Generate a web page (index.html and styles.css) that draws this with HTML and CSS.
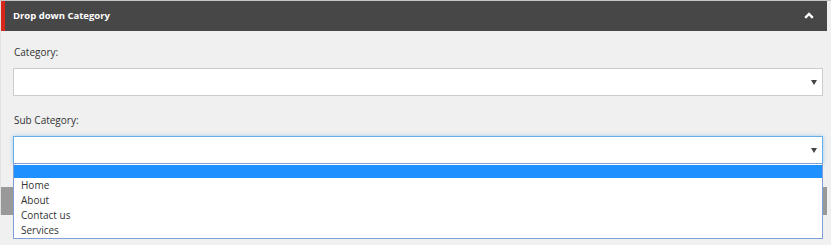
FILE: index.html
```html
<!DOCTYPE html>
<html lang="en">
<head>
    <meta charset="UTF-8">
    <meta name="viewport" content="width=device-width, initial-scale=1.0">
    <title>Drop down Category</title>
    <link rel="stylesheet" href="styles.css">
</head>
<body>
    <div class="panel">
        <!-- Header -->
        <div class="panel-header">
            <span class="panel-title">Drop down Category</span>
            <svg class="chevron" width="10" height="7" viewBox="0 0 10 7">
                <polyline points="1.2,5.8 5,2 8.8,5.8" fill="none" stroke="#fff" stroke-width="2.4"/>
            </svg>
        </div>

        <div class="panel-body">
            <div class="form-group">
                <label>Category:</label>
                <div class="select">
                    <svg class="arrow" width="6" height="5" viewBox="0 0 6 5"><polygon points="0,0 6,0 3,5" fill="#444"/></svg>
                </div>
            </div>

            <div class="form-group">
                <label>Sub Category:</label>
                <div class="select select-open">
                    <svg class="arrow" width="6" height="5" viewBox="0 0 6 5"><polygon points="0,0 6,0 3,5" fill="#444"/></svg>
                    <ul class="options">
                        <li class="selected"></li>
                        <li>Home</li>
                        <li>About</li>
                        <li>Contact us</li>
                        <li>Services</li>
                    </ul>
                </div>
            </div>
        </div>

        <div class="btn-bar"></div>
    </div>
</body>
</html>
```

FILE: styles.css
```css
body {
    margin: 0;
    padding: 0;
    min-height: 245px;
    box-sizing: border-box;
    font-family: "Open Sans", Arial, sans-serif;
    background-color: #f0f0f0;
    border-top: 1px solid #c6c6c6;
}

.panel {
    width: 827px;
    border-left: 1px solid #e2e2e2;
    box-sizing: border-box;
}

.panel-header {
    height: 30px;
    background-color: #474747;
    border-left: 4px solid #d9261c;
    display: flex;
    align-items: center;
    justify-content: space-between;
    padding: 0 13px 0 8px;
}

.panel-title {
    color: white;
    font-weight: bold;
    font-size: 9.5px;
    margin-top: -1px;
}

.chevron {
    display: block;
    margin-top: -1px;
}

.panel-body {
    padding: 14px 4px 0 12px;
}

.form-group {
    margin-bottom: 17px;
}

.form-group:last-child {
    margin-bottom: 0;
}

.form-group label {
    display: block;
    font-size: 10px;
    line-height: 15px;
    color: #333;
    margin-bottom: 8px;
    padding-left: 1px;
}

.select {
    position: relative;
    height: 28px;
    background: white;
    border: 1px solid #cccccc;
    box-sizing: border-box;
    display: flex;
    align-items: center;
    justify-content: flex-end;
    padding-right: 5px;
}

.select-open {
    border-color: #66afe9;
    box-shadow: 0 0 4px rgba(102, 175, 233, 0.6);
}

.arrow {
    display: block;
    margin-top: 1px;
}

.options {
    position: absolute;
    top: 26px;
    left: -1px;
    width: 810px;
    box-sizing: border-box;
    margin: 0;
    padding: 1px 0 0;
    list-style: none;
    background: white;
    border: 1px solid #7f9fd6;
    z-index: 2;
}

.options li {
    height: 15px;
    line-height: 15px;
    font-size: 10px;
    color: #333;
    padding-left: 7px;
}

.options li.selected {
    height: 13px;
    background-color: #1e90ff;
}

.btn-bar {
    margin-top: 23px;
    height: 28px;
    background-color: #999999;
}
```
